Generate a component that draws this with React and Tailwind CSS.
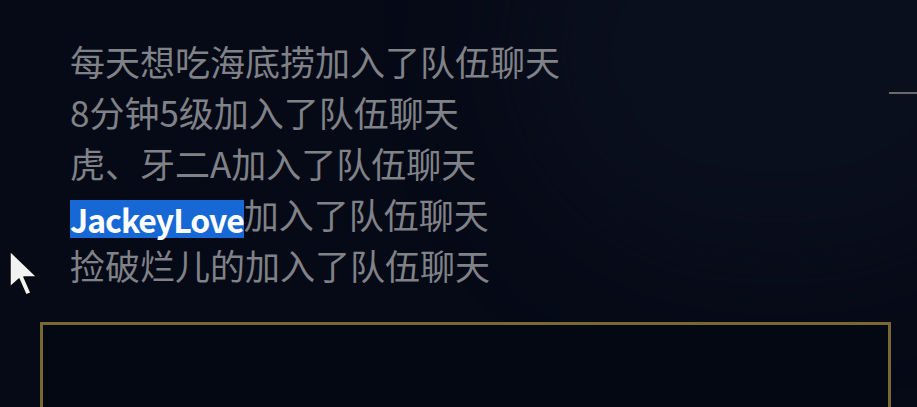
import React from "react";

const lines = [
  { name: "每天想吃海底捞" },
  { name: "8分钟5级" },
  { name: "虎、牙二A" },
  { name: "JackeyLove", selected: true },
  { name: "捡破烂儿的" },
];

const Cursor = () => (
  <svg width="32" height="50" viewBox="0 0 32 50" className="absolute left-[8px] top-[249px]">
    <path
      d="M2 2 L2 38 L11 30 L18 46 L23 44 L16 28 L29 28 Z"
      fill="#f2f2f2"
      stroke="#0a0a0a"
      strokeWidth="1.5"
      strokeLinejoin="round"
    />
  </svg>
);

export default function App() {
  return (
    <div
      className="relative h-[407px] w-[917px] overflow-hidden bg-[#060a17]"
      style={{ fontFamily: '"Noto Sans CJK SC", "Noto Sans", sans-serif' }}
    >
      {/* faint glow top right */}
      <div className="absolute right-[-120px] top-[-160px] h-[420px] w-[520px] rounded-full bg-[#0d1322] opacity-60 blur-3xl" />
      <div className="absolute right-0 top-[92px] h-[2px] w-[28px] bg-[#6b6a68]" />

      <Cursor />

      <div className="relative flex flex-col pl-[70px] pt-[35px]">
        {lines.map((l) => (
          <div key={l.name} className="h-[51px] whitespace-nowrap text-[35px] leading-[51px] text-[#808287]">
            {l.selected ? (
              <span className="inline-block h-[38px] bg-[#1767d4] align-[-4px] text-[32px] font-bold leading-[38px] tracking-[-1px] text-white">
                {l.name}
              </span>
            ) : (
              l.name
            )}
            加入了队伍聊天
          </div>
        ))}
      </div>

      <div className="relative ml-[40px] mt-[32px] h-[120px] w-[851px] border-[3px] border-b-0 border-[#7a6733] bg-[#040813]" />
    </div>
  );
}
